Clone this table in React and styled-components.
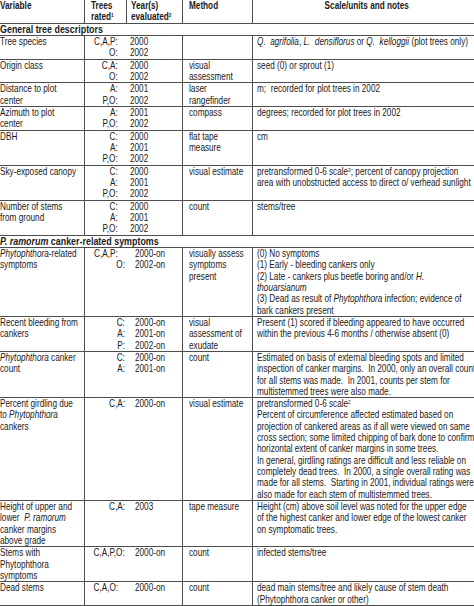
import React from "react";
import styled, { createGlobalStyle } from "styled-components";

const Global = createGlobalStyle`
  html, body { margin: 0; padding: 0; background: #ffffff; overflow: hidden; }
`;

const LINE = "#4d4d4d";
const NARROW = 0.796; // Arial Narrow look from Arial metrics

const Sheet = styled.div`
  width: 474px;
  height: 606px;
  overflow: hidden;
  background: #ffffff;
  font-family: "Liberation Sans", Arial, "Helvetica Neue", Helvetica, sans-serif;
  font-size: 10.3px;
  line-height: 11.33px;
  color: #1a1a1a;
`;

const Table = styled.table`
  border-collapse: collapse;
  table-layout: fixed;
  width: 480px;
`;

const HeadCell = styled.th`
  padding: 0 0 0 ${(p) => p.$pad || 0}px;
  text-align: ${(p) => p.$align || "left"};
  vertical-align: top;
  font-weight: bold;
  border-bottom: 1px solid ${LINE};
  border-right: ${(p) => (p.$divider ? `1px solid ${LINE}` : "none")};
`;

const SectionCell = styled.td`
  padding: 0;
  font-size: 11.2px;
  font-weight: bold;
  border-bottom: 1px solid ${LINE};
`;

const Cell = styled.td`
  padding: 0 ${(p) => p.$padR || 0}px 0 ${(p) => p.$padL || 0}px;
  vertical-align: top;
  text-align: ${(p) => p.$align || "left"};
  border-bottom: 1px solid ${LINE};
  border-right: ${(p) => (p.$divider ? `1px solid ${LINE}` : "none")};
`;

/* One printed line of the narrow typeface */
const Line = styled.div`
  display: block;
  white-space: pre;
  transform: scaleX(${NARROW});
  transform-origin: ${(p) => p.$origin || "left"} top;
`;

const RatedLine = styled(Line)`
  padding-right: ${(p) => (p.$near ? 2 : 11)}px;
`;

const Sup = styled.sup`
  font-size: 6px;
  line-height: 0;
  vertical-align: 3px;
`;

const I = styled.i`
  font-style: italic;
`;

const general = [
  {
    v: ["Tree species"],
    r: [["C,A,P:"], ["O:"]],
    y: ["2000", "2002"],
    m: [],
    n: [
      <>
        <I>Q.  agrifolia</I>, <I>L.  densiflorus</I> or <I>Q.  kelloggii</I> (plot trees only)
      </>,
    ],
  },
  { v: ["Origin class"], r: [["C,A:"], ["O:"]], y: ["2000", "2002"], m: ["visual", "assessment"], n: ["seed (0) or sprout (1)"] },
  { v: ["Distance to plot", "center"], r: [["A:"], ["P,O:"]], y: ["2001", "2002"], m: ["laser", "rangefinder"], n: ["m;  recorded for plot trees in 2002"] },
  { v: ["Azimuth to plot", "center"], r: [["A:"], ["P,O:"]], y: ["2001", "2002"], m: ["compass"], n: ["degrees; recorded for plot trees in 2002"] },
  { v: ["DBH"], r: [["C:"], ["A:"], ["P,O:"]], y: ["2000", "2001", "2002"], m: ["flat tape", "measure"], n: ["cm"] },
  {
    v: ["Sky-exposed canopy"],
    r: [["C:"], ["A:"], ["P,O:"]],
    y: ["2000", "2001", "2002"],
    m: ["visual estimate"],
    n: [
      <>
        pretransformed 0-6 scale<Sup>3</Sup>; percent of canopy projection
      </>,
      "area with unobstructed access to direct o/ verhead sunlight",
    ],
  },
  { v: ["Number of stems", "from ground"], r: [["C:"], ["A:"], ["P,O:"]], y: ["2000", "2001", "2002"], m: ["count"], n: ["stems/tree"] },
];

const ramorum = [
  {
    v: [<><I>Phytophthora</I>-related</>, "symptoms"],
    r: [["C,A,P:"], ["O:", true]],
    y: ["2000-on", "2002-on"],
    m: ["visually assess", "symptoms", "present"],
    n: [
      "(0) No symptoms",
      "(1) Early - bleeding cankers only",
      <>(2) Late - cankers plus beetle boring and/or <I>H.</I></>,
      <I>thouarsianum</I>,
      <>(3) Dead as result of <I>Phytophthora</I> infection; evidence of</>,
      "bark cankers present",
    ],
  },
  {
    v: ["Recent bleeding from", "cankers"],
    r: [["C:", true], ["A:", true], ["P:", true]],
    y: ["2000-on", "2001-on", "2002-on"],
    m: ["visual", "assessment of", "exudate"],
    n: ["Present (1) scored if bleeding appeared to have occurred", "within the previous 4-6 months / otherwise absent (0)"],
  },
  {
    v: [<><I>Phytophthora</I> canker</>, "count"],
    r: [["C:", true], ["A:", true]],
    y: ["2000-on", "2001-on"],
    m: ["count"],
    n: [
      "Estimated on basis of external bleeding spots and limited",
      "inspection of canker margins.  In 2000, only an overall count",
      "for all stems was made.  In 2001, counts per stem for",
      "multistemmed trees were also made.",
    ],
  },
  {
    v: ["Percent girdling due", <>to <I>Phytophthora</I></>, "cankers"],
    r: [["C,A:", true]],
    y: ["2000-on"],
    m: ["visual estimate"],
    n: [
      <>pretransformed 0-6 scale<Sup>2</Sup></>,
      "Percent of circumference affected estimated based on",
      "projection of cankered areas as if all were viewed on same",
      "cross section; some limited chipping of bark done to confirm",
      "horizontal extent of canker margins in some trees.",
      "In general, girdling ratings are difficult and less reliable on",
      "completely dead trees.  In 2000, a single overall rating was",
      "made for all stems.  Starting in 2001, individual ratings were",
      "also made for each stem of multistemmed trees.",
    ],
  },
  {
    v: ["Height of upper and", <>lower  <I>P. ramorum</I></>, "canker margins", "above grade"],
    r: [["C,A:", true]],
    y: ["2003"],
    m: ["tape measure"],
    n: [
      "Height (cm) above soil level was noted for the upper edge",
      "of the highest canker and lower edge of the lowest canker",
      "on symptomatic trees.",
    ],
  },
  {
    v: ["Stems with", "Phytophthora", "symptoms"],
    r: [["C,A,P,O:"]],
    y: ["2000-on"],
    m: ["count"],
    n: ["infected stems/tree"],
  },
  {
    v: ["Dead stems"],
    r: [["C,A,O:"]],
    y: ["2000-on"],
    m: ["count"],
    n: ["dead main stems/tree and likely cause of stem death", "(Phytophthora canker or other)"],
  },
];

function DataRow({ row, yearPad }) {
  return (
    <tr>
      <Cell $divider>
        {row.v.map((t, i) => (
          <Line key={i}>{t}</Line>
        ))}
      </Cell>
      <Cell $align="right">
        {row.r.map(([t, near], i) => (
          <RatedLine key={i} $near={near} $origin="right">
            {t}
          </RatedLine>
        ))}
      </Cell>
      <Cell $padL={yearPad} $divider>
        {row.y.map((t, i) => (
          <Line key={i}>{t}</Line>
        ))}
      </Cell>
      <Cell $padL={6} $divider>
        {row.m.map((t, i) => (
          <Line key={i}>{t}</Line>
        ))}
      </Cell>
      <Cell $padL={4}>
        {row.n.map((t, i) => (
          <Line key={i}>{t}</Line>
        ))}
      </Cell>
    </tr>
  );
}

export default function App() {
  return (
    <Sheet>
      <Global />
      <Table>
        <colgroup>
          <col style={{ width: 84 }} />
          <col style={{ width: 42 }} />
          <col style={{ width: 56 }} />
          <col style={{ width: 70 }} />
          <col style={{ width: 228 }} />
        </colgroup>
        <thead>
          <tr>
            <HeadCell $divider>
              <Line>Variable</Line>
            </HeadCell>
            <HeadCell $divider $pad={6}>
              <Line>Trees</Line>
              <Line>
                rated<Sup>1</Sup>
              </Line>
            </HeadCell>
            <HeadCell $divider $pad={4}>
              <Line>Year(s)</Line>
              <Line>
                evaluated<Sup>2</Sup>
              </Line>
            </HeadCell>
            <HeadCell $divider $pad={6}>
              <Line>Method</Line>
            </HeadCell>
            <HeadCell $align="center">
              <Line $origin="center">Scale/units and notes</Line>
            </HeadCell>
          </tr>
        </thead>
        <tbody>
          <tr>
            <SectionCell colSpan={5}>
              <Line>General tree descriptors</Line>
            </SectionCell>
          </tr>
          {general.map((row, i) => (
            <DataRow key={i} row={row} yearPad={4} />
          ))}
          <tr>
            <SectionCell colSpan={5}>
              <Line>
                <I>P. ramorum</I> canker-related symptoms
              </Line>
            </SectionCell>
          </tr>
          {ramorum.map((row, i) => (
            <DataRow key={i} row={row} yearPad={9} />
          ))}
        </tbody>
      </Table>
    </Sheet>
  );
}
